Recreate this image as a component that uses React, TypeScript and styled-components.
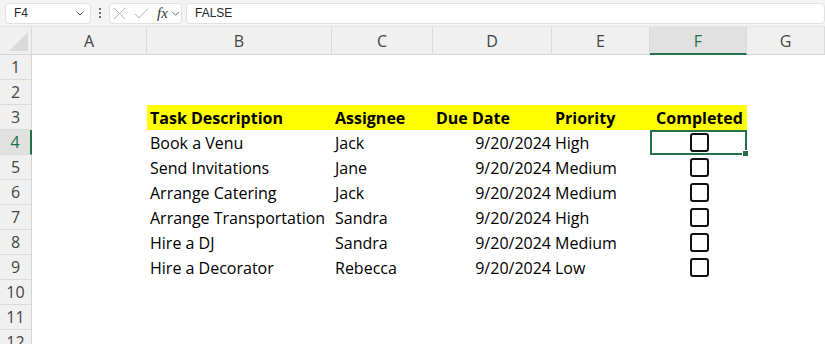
import React from "react";
import styled, { createGlobalStyle } from "styled-components";

const GlobalStyle = createGlobalStyle`
  html, body {
    margin: 0;
    padding: 0;
    background: #ffffff;
    overflow: hidden;
  }
  body {
    font-family: "Open Sans", "Liberation Sans", sans-serif;
  }
`;

const Page = styled.div`
  width: 825px;
  height: 344px;
  display: flex;
  flex-direction: column;
  overflow: hidden;
  background: #ffffff;
`;

const FormulaBar = styled.div`
  height: 27px;
  flex-shrink: 0;
  display: flex;
  align-items: center;
  gap: 4px;
  padding: 0 0 0 5px;
  background: #f3f3f3;
  box-sizing: border-box;
  border-bottom: 1px solid #e4e2df;
`;

const Box = styled.div<{ $width?: number; $pad?: number }>`
  height: 21px;
  box-sizing: border-box;
  width: ${(p) => (p.$width ? `${p.$width}px` : "auto")};
  flex: ${(p) => (p.$width ? "none" : "1")};
  background: #ffffff;
  border: 1px solid #e1e1e1;
  border-radius: 4px;
  display: flex;
  align-items: center;
  padding: 0 5px 0 ${(p) => p.$pad ?? 8}px;
  font-size: 12px;
  color: #262626;
  font-family: "Liberation Sans", Arial, sans-serif;
`;

const NameText = styled.span`
  flex: 1;
`;

const Dots = styled.div`
  width: 10px;
  display: flex;
  flex-direction: column;
  align-items: center;
  gap: 2px;
  & > span {
    width: 2px;
    height: 2px;
    background: #444;
    border-radius: 1px;
  }
`;

const IconGroup = styled.div`
  display: flex;
  align-items: center;
  gap: 8px;
`;

const Fx = styled.span`
  font-family: "Liberation Serif", "Times New Roman", serif;
  font-style: italic;
  font-size: 15px;
  color: #333;
  line-height: 1;
`;

const Sheet = styled.div`
  display: grid;
  grid-template-columns: 32px 115px 185px 101px 119px 98px 97px 1fr;
  grid-template-rows: 28px;
  grid-auto-rows: 25px;
`;

const Corner = styled.div`
  position: relative;
  background: #f0f0f0;
  border-right: 1px solid #d9d9d9;
  border-bottom: 1px solid #d4d4d4;
  box-sizing: border-box;
  &::after {
    content: "";
    position: absolute;
    right: 3px;
    bottom: 3px;
    width: 0;
    height: 0;
    border-left: 19px solid transparent;
    border-bottom: 19px solid #dadada;
  }
`;

const ColHead = styled.div<{ $active?: boolean }>`
  background: ${(p) => (p.$active ? "#e1e1e1" : "#f0f0f0")};
  color: ${(p) => (p.$active ? "#217346" : "#444444")};
  border-right: 1px solid #dadada;
  border-bottom: ${(p) => (p.$active ? "2px solid #217346" : "1px solid #d4d4d4")};
  box-sizing: border-box;
  display: flex;
  align-items: center;
  justify-content: center;
  font-size: 16px;
  padding-top: 1px;
`;

const RowHead = styled.div<{ $active?: boolean }>`
  background: ${(p) => (p.$active ? "#e1e1e1" : "#f0f0f0")};
  color: ${(p) => (p.$active ? "#217346" : "#444444")};
  border-right: ${(p) => (p.$active ? "2px solid #217346" : "1px solid #d4d4d4")};
  border-bottom: 1px solid #dadada;
  box-sizing: border-box;
  display: flex;
  align-items: center;
  justify-content: center;
  font-size: 16px;
`;

const Cell = styled.div<{ $align?: "left" | "right" | "center"; $bold?: boolean; $fill?: boolean; $selected?: boolean }>`
  position: relative;
  box-sizing: border-box;
  display: flex;
  align-items: center;
  justify-content: ${(p) =>
    p.$align === "right" ? "flex-end" : p.$align === "center" ? "center" : "flex-start"};
  padding: 0 1px 0 3px;
  font-size: 16px;
  font-weight: ${(p) => (p.$bold ? 700 : 400)};
  color: #000000;
  white-space: nowrap;
  background: ${(p) => (p.$fill ? "#ffff00" : "transparent")};
  border: ${(p) => (p.$selected ? "2px solid #217346" : "none")};
`;

const Handle = styled.span`
  position: absolute;
  right: -4px;
  bottom: -4px;
  width: 5px;
  height: 5px;
  background: #217346;
  border: 1px solid #ffffff;
`;

const CheckBox = styled.span`
  width: 15px;
  height: 15px;
  border: 2px solid #111;
  border-radius: 3px;
  background: #fff;
`;

const columns = ["A", "B", "C", "D", "E", "F", "G"];

const tasks = [
  ["Book a Venu", "Jack", "9/20/2024", "High"],
  ["Send Invitations", "Jane", "9/20/2024", "Medium"],
  ["Arrange Catering", "Jack", "9/20/2024", "Medium"],
  ["Arrange Transportation", "Sandra", "9/20/2024", "High"],
  ["Hire a DJ", "Sandra", "9/20/2024", "Medium"],
  ["Hire a Decorator", "Rebecca", "9/20/2024", "Low"],
];

const Chevron = ({ size = 10 }: { size?: number }) => (
  <svg width={size} height={size} viewBox="0 0 10 10" fill="none" stroke="#555" strokeWidth="1">
    <path d="M1.5 3.5 L5 7 L8.5 3.5" />
  </svg>
);

const EmptyRow = ({ n }: { n: number }) => (
  <>
    <RowHead>{n}</RowHead>
    {columns.map((c) => (
      <Cell key={c} />
    ))}
  </>
);

const App = () => {
  return (
    <Page>
      <GlobalStyle />
      <FormulaBar>
        <Box $width={86}>
          <NameText>F4</NameText>
          <Chevron />
        </Box>
        <Dots>
          <span />
          <span />
          <span />
        </Dots>
        <Box $width={73} $pad={3}>
          <IconGroup>
            <svg width="13" height="13" viewBox="0 0 13 13" fill="none" stroke="#b5b5b5" strokeWidth="1">
              <path d="M1 1 L12 12 M12 1 L1 12" />
            </svg>
            <svg width="15" height="13" viewBox="0 0 15 13" fill="none" stroke="#b5b5b5" strokeWidth="1">
              <path d="M1 7 L5 11 L14 1.5" />
            </svg>
            <Fx>fx</Fx>
          </IconGroup>
          <span style={{ marginLeft: 3, display: "flex" }}>
            <Chevron size={9} />
          </span>
        </Box>
        <Box>FALSE</Box>
      </FormulaBar>
      <Sheet>
        <Corner />
        {columns.map((c) => (
          <ColHead key={c} $active={c === "F"}>
            {c}
          </ColHead>
        ))}
        <EmptyRow n={1} />
        <EmptyRow n={2} />
        <RowHead>3</RowHead>
        <Cell />
        <Cell $bold $fill>Task Description</Cell>
        <Cell $bold $fill>Assignee</Cell>
        <Cell $bold $fill>Due Date</Cell>
        <Cell $bold $fill>Priority</Cell>
        <Cell $bold $fill $align="center">Completed</Cell>
        <Cell />
        {tasks.map((t, i) => (
          <React.Fragment key={t[0]}>
            <RowHead $active={i === 0}>{i + 4}</RowHead>
            <Cell />
            <Cell>{t[0]}</Cell>
            <Cell>{t[1]}</Cell>
            <Cell $align="right">{t[2]}</Cell>
            <Cell>{t[3]}</Cell>
            <Cell $align="center" $selected={i === 0}>
              <CheckBox />
              {i === 0 && <Handle />}
            </Cell>
            <Cell />
          </React.Fragment>
        ))}
        <EmptyRow n={10} />
        <EmptyRow n={11} />
        <EmptyRow n={12} />
      </Sheet>
    </Page>
  );
};

export default App;
